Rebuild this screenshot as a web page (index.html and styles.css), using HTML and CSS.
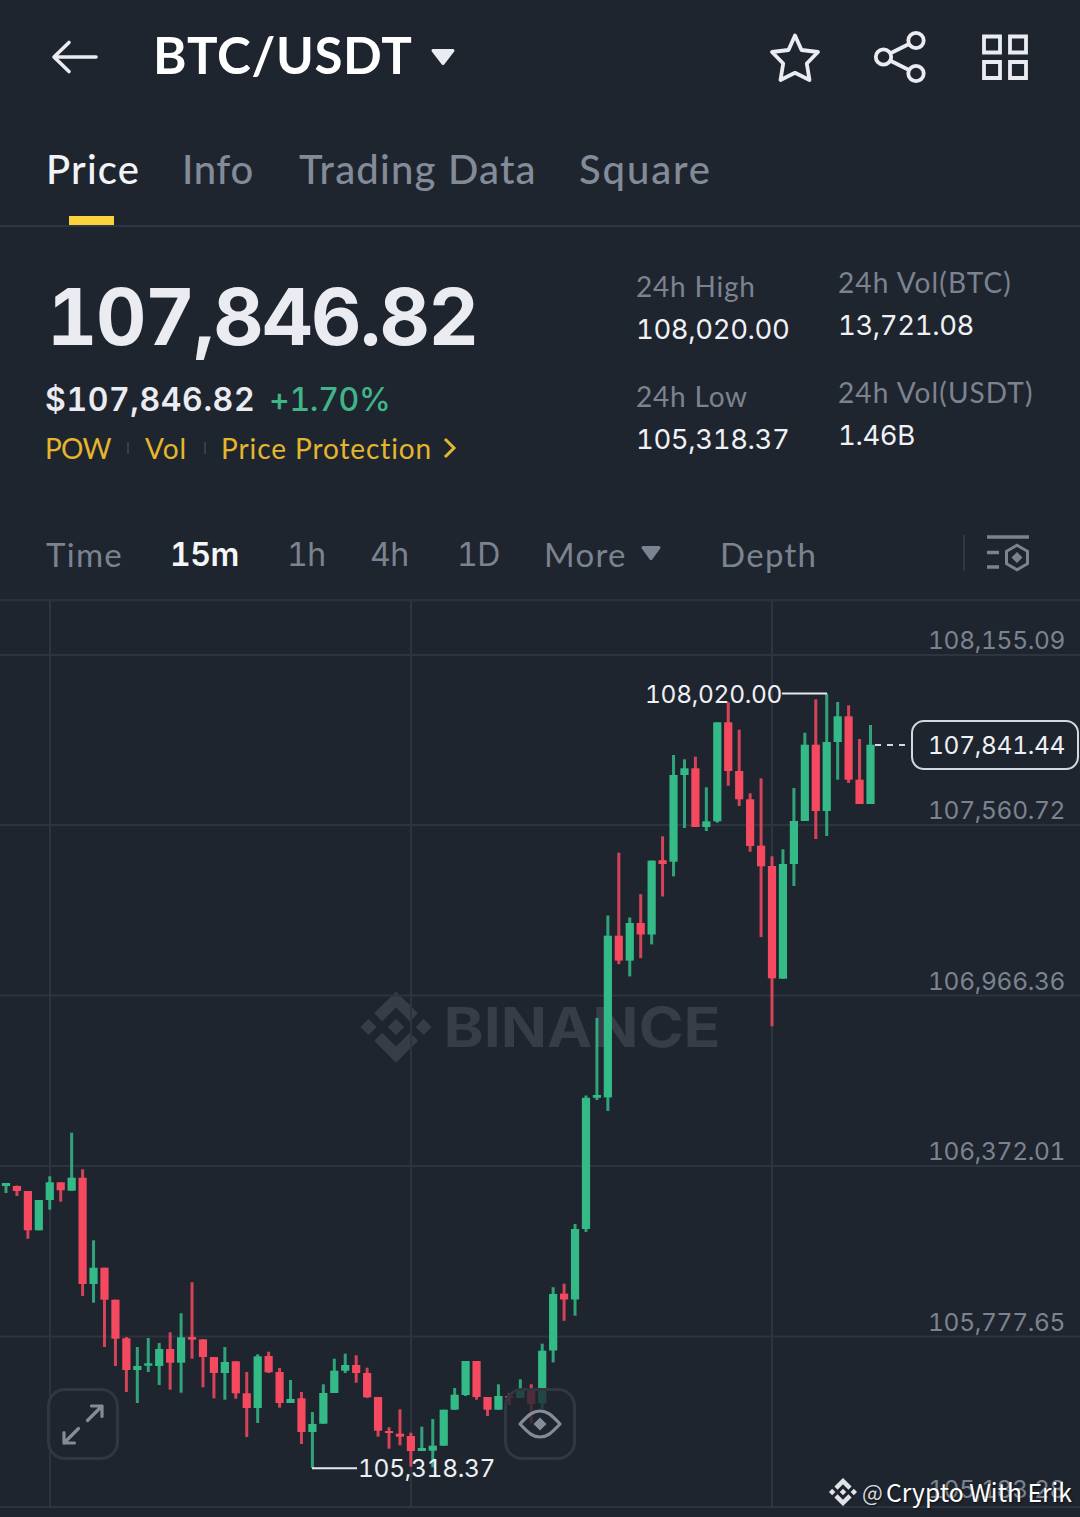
FILE: index.html
```html
<!DOCTYPE html>
<html lang="en">
<head>
<meta charset="utf-8">
<title>BTC/USDT</title>
<link rel="stylesheet" href="styles.css">
</head>
<body>
<header class="topbar">
  <svg class="back" width="48" height="36" viewBox="0 0 48 36"><path d="M19 3.500 4 18l15 14.500M4.500 18h41.500"/></svg>
  <h1 class="pair">BTC/USDT</h1>
  <svg class="pair-caret" width="26" height="18" viewBox="0 0 26 18"><path d="M3 2.500h20l-10 13z"/></svg>
  <div class="actions">
    <svg width="54" height="54" viewBox="0 0 54 54"><path d="M27 5.500 33.500 20 50 22 38.800 33.500 41.500 50 27 42.800 12.500 50 15.200 33.500 4 22 20.500 20z"/></svg>
    <svg width="54" height="54" viewBox="0 0 54 54"><circle cx="10.500" cy="27" r="7.700"/><circle cx="43" cy="10.500" r="7.700"/><circle cx="43" cy="43.500" r="7.700"/><path d="M17.500 23.300 36 14M17.500 30.700 36 40"/></svg>
    <svg class="square-icon" width="54" height="54" viewBox="0 0 54 54"><path d="M6 6.500h16v16H6zM32 6.500h16v16H32zM6 32h16v16H6zM32 32h16v16H32z"/></svg>
  </div>
</header>

<nav class="tabs">
  <span class="tab active">Price</span>
  <span class="tab info">Info</span>
  <span class="tab">Trading Data</span>
  <span class="tab square">Square</span>
</nav>

<section class="summary">
  <div class="quote">
    <div class="last">107,846.82</div>
    <div class="sub"><span class="fiat">$107,846.82</span><span class="change">+1.70%</span></div>
    <div class="tags">
      <span class="tag-pow">POW</span><i></i><span class="tag-vol">Vol</span><i></i><span class="tag-pp">Price Protection</span>
      <svg width="16" height="24" viewBox="0 0 16 24"><path d="M4 3 13 12l-9 9"/></svg>
    </div>
  </div>
  <dl class="stats">
    <div><dt>24h High</dt><dd>108,020.00</dd></div>
    <div><dt>24h Low</dt><dd>105,318.37</dd></div>
  </dl>
  <dl class="stats volume">
    <div><dt>24h Vol(BTC)</dt><dd>13,721.08</dd></div>
    <div><dt>24h Vol(USDT)</dt><dd>1.46B</dd></div>
  </dl>
</section>

<nav class="intervals">
  <span class="word">Time</span>
  <span class="active">15m</span>
  <span>1h</span>
  <span>4h</span>
  <span>1D</span>
  <span class="word">More</span>
  <svg class="more-caret" width="22" height="16" viewBox="0 0 22 16"><path d="M3 2.500h16l-8 11z"/></svg>
  <span class="word">Depth</span>
  <b class="divider"></b>
  <svg class="settings" width="46" height="40" viewBox="0 0 46 40"><path d="M2 4h42M2 19.500h12M2 34h12"/><path class="thin" d="M32 12.300 42.500 18.300v12.400L32 36.700 21.500 30.700V18.300z"/><path class="fill" d="m32 19 5.500 5.500L32 30l-5.500-5.500z"/></svg>
</nav>

<main class="chart">
  <svg class="plot" width="1080" height="918" viewBox="0 599 1080 918">
    <defs>
      <path id="logo" d="M38.730 53.200 63.310 28.620 87.900 53.210 102.200 38.910 63.310 0 24.430 38.900zM0 63.310 14.300 49l14.300 14.310-14.300 14.300zM38.730 73.410 63.310 98l24.590-24.600 14.310 14.290-38.900 38.920L24.430 87.740zM98 63.310 112.300 49l14.310 14.300-14.300 14.310zM77.830 63.300 63.310 48.780 48.810 63.270l14.500 14.500z"/>
    </defs>
    <g class="watermark">
      <use href="#logo" transform="translate(360.500 991.500) scale(.562)"/>
      <text x="443.500" y="1047" textLength="277" lengthAdjust="spacingAndGlyphs">BINANCE</text>
    </g>
    <path class="edge" d="M0 600h1080"/>
    <path class="grid" d="M0 655h1080M0 825h1080M0 995.500h1080M0 1166h1080M0 1336.500h1080M0 1507h1080M50 601v906M411 601v906M772 601v906"/>
    <g class="axis">
      <text x="928" y="649" textLength="137.500">108,155.09</text>
      <text x="928" y="819" textLength="137.500">107,560.72</text>
      <text x="928" y="990" textLength="137.500">106,966.36</text>
      <text x="928" y="1160" textLength="137.500">106,372.01</text>
      <text x="928" y="1331" textLength="137.500">105,777.65</text>
      <text x="928" y="1498" textLength="137.500">105,183.28</text>
    </g>
    <g id="candles"></g>
    <path class="current" d="M875 745h38"/>
    <rect class="price-box" x="912" y="721" width="166" height="48" rx="12"/>
    <path class="leader" d="M782 693.500h45M312 1468.200h45"/>
    <g class="mark">
      <text x="928" y="754" textLength="137.500">107,841.44</text>
      <text x="645" y="703" textLength="137.500">108,020.00</text>
      <text x="358" y="1477" textLength="137.500">105,318.37</text>
    </g>
  </svg>
  <button class="tool expand"><svg width="46" height="46" viewBox="0 0 46 46"><path d="M27.500 19.500 42 5M31.500 5H42v10.500M18.500 27.500 4 42M4 31.500V42h10.500"/></svg></button>
  <button class="tool eye"><svg width="46" height="34" viewBox="0 0 46 34"><path d="M3 17C12 7.500 16 4 23 4s11 3.500 20 13c-9 9.500-13 13-20 13S12 26.500 3 17z"/><path class="fill" d="m23 10.500 6.500 6.500-6.500 6.500-6.500-6.500z"/></svg></button>
  <div class="credit">
    <svg width="28" height="28" viewBox="0 0 126.600 126.600"><use href="#logo"/></svg>
    <span class="at">@</span><span>Crypto With Erik</span>
  </div>
</main>
<script src="chart.js"></script>
</body>
</html>
```
FILE: styles.css
```css
* { box-sizing: border-box; }
body {
  margin: 0;
  width: 1080px;
  height: 1517px;
  overflow: hidden;
  background: #1f252f;
  color: #eaecf2;
  font-family: Lato, "Open Sans", sans-serif;
}
svg { display: block; flex: none; fill: none; }
h1, dl, dd { margin: 0; }

.topbar { height: 114px; display: flex; align-items: center; padding: 0 48px 0 50px; }
.back { stroke: #eaecf2; stroke-width: 3.6; stroke-linecap: round; stroke-linejoin: round; }
.pair { width: 276px; margin-left: 55px; padding-bottom: 5px; font-size: 51px; font-weight: 700; line-height: 60px; color: #fff; letter-spacing: 0.7px; white-space: nowrap; }
.pair-caret, .more-caret { stroke-linejoin: round; stroke-width: 3; }
.pair-caret { margin-left: 1px; fill: #eaecf2; stroke: #eaecf2; }
.actions { margin-left: auto; display: flex; gap: 51px; }
.actions svg { stroke: #eaecf2; stroke-width: 3.8; stroke-linejoin: round; }
.actions .square-icon { stroke-linejoin: miter; }

.tabs { height: 113px; display: grid; grid-template-columns: 136px 117px 280px auto; padding-left: 46px; border-bottom: 2px solid #2f3643; font-size: 40px; font-weight: 500; line-height: 111px; color: #848b98; white-space: nowrap; letter-spacing: 1.2px; }
.tab.active { position: relative; color: #f2f3f7; }
.tab.info { letter-spacing: 0.6px; }
.tab.square { letter-spacing: 1.9px; }
.tab.active::after { content: ""; position: absolute; left: 23px; bottom: 0; width: 45px; height: 9px; background: #fad33c; }

.summary { height: 280px; display: grid; grid-template-columns: 590px 202px auto; padding-left: 46px; white-space: nowrap; }
.quote { padding-top: 45px; }
.last { padding-left: 1px; font: 700 78px/90px Inter, sans-serif; font-variant-numeric: tabular-nums; letter-spacing: -1.5px; }
.sub { display: flex; margin-top: 18px; margin-left: -1px; font: 600 32px/40px Inter, sans-serif; font-variant-numeric: tabular-nums; letter-spacing: 0.6px; }
.fiat { width: 224px; }
.change { color: #3fb588; font-weight: 500; letter-spacing: -0.3px; }
.tags { display: flex; align-items: center; margin-top: 10px; margin-left: -1px; font-size: 28px; line-height: 36px; color: #e3b62c; letter-spacing: 0.9px; }
.tags i { width: 2px; height: 12px; background: #39404c; }
.tag-pow { width: 82px; letter-spacing: -0.7px; }
.tag-vol { width: 59px; margin-left: 16px; }
.tag-pp { width: 220px; margin-left: 15px; }
.tags svg { stroke: #e3b62c; stroke-width: 3; }
.stats { display: flex; flex-direction: column; gap: 24px; padding-top: 38px; font-size: 28px; line-height: 43px; }
.stats.volume { padding-top: 34px; }
.stats dt { color: #7c8390; letter-spacing: 0.8px; }
.stats.volume dt { letter-spacing: 1.1px; }
.stats dd { font-family: Inter, sans-serif; font-size: 27.5px; font-variant-numeric: tabular-nums; letter-spacing: -0.4px; color: #f0f1f5; }

.intervals { height: 92px; display: grid; grid-template-columns: 124px 117px 83px 87px 87px 96px 80px 243px 21px auto; align-items: center; padding-left: 46px; font: 400 32px/40px Inter, sans-serif; font-variant-numeric: tabular-nums; color: #7c8390; white-space: nowrap; letter-spacing: -0.4px; }
.intervals span { padding-top: 3px; }
.intervals .word { padding-top: 2px; font-family: Lato, sans-serif; font-size: 33px; letter-spacing: 1.3px; }
.intervals .active { color: #f5f6f8; font-weight: 600; }
.more-caret { fill: #7c8390; stroke: #7c8390; }
.divider { width: 2px; height: 36px; background: #303743; }
.settings { margin-left: 1px; stroke: #7c8390; stroke-width: 3.6; }
.settings .thin { stroke-width: 3; }
.fill { fill: #7c8390; stroke: none; }

.chart { position: relative; height: 918px; }
.edge { stroke: #2a313b; stroke-width: 3; }
.grid { stroke: #2d343f; stroke-width: 2; }
.watermark { fill: #363d47; font: 700 55px Inter, sans-serif; }
.axis { fill: #7c8390; }
.axis, .mark { font: 400 24.5px Inter, sans-serif; font-variant-numeric: tabular-nums; }
.mark { fill: #eff0f5; }
.up { fill: #33ba87; }
.down { fill: #f4495f; }
.wick { opacity: .85; }
.leader { stroke: #e6e8ee; stroke-width: 2; }
.current { stroke: #d5d8de; stroke-width: 2; stroke-dasharray: 6 6; }
.price-box { fill: #1f252f; stroke: #d5d8de; stroke-width: 2; }

.tool { position: absolute; top: 789px; width: 72px; height: 72px; padding: 0; display: grid; place-items: center; border: 3px solid #303742; border-radius: 18px; background: rgba(31, 37, 47, .78); }
.tool svg { stroke: #858b97; stroke-width: 3.2; stroke-linejoin: round; stroke-linecap: round; }
.expand { left: 47px; }
.eye { left: 504px; }
.eye .fill { fill: #858b97; stroke: none; }
.credit { position: absolute; left: 829px; bottom: 6px; display: flex; align-items: center; font: 400 24.7px/40px "Noto Sans CJK SC", sans-serif; color: #fff; white-space: nowrap; text-shadow: 1px 1px 2px #0009; }
.credit span { margin-top: -2px; }
.credit svg { fill: #e0e3e8; }
.credit .at { width: 24px; margin-left: 5px; font-size: 22px; color: #d5d8de; }
```
FILE: chart.js
```js
// One row per candle: direction, high, body top, body bottom, low (chart y units)
const candles = [
['u',1183,1183,1186,1193],['d',1185.5,1186,1191,1196],['d',1191,1191,1230.3,1238.7],['u',1200,1200,1230.3,1230.3],
['u',1176.3,1182.3,1200,1209.7],['d',1182.3,1182.3,1190.3,1201.7],['u',1132.7,1177.7,1190.7,1190.7],['d',1169.3,1177.7,1284,1296],
['u',1240.3,1267.7,1284,1302.7],['d',1267.7,1267.7,1299.7,1347],['d',1299.7,1299.7,1338.7,1366],['d',1337,1338.3,1370,1392],
['u',1347,1366,1370,1403],['u',1338,1363.3,1365.7,1372],['u',1343,1349,1366,1385],['d',1332.3,1349,1362.7,1389.7],
['u',1313.3,1337.3,1362.7,1392.7],['d',1282.3,1337,1339.7,1358.7],['d',1339.3,1339.3,1357,1387.3],['d',1357,1357,1373,1398.3],
['u',1347,1362,1373,1399.7],['d',1361.3,1361.3,1393.3,1398.7],['d',1372,1393.3,1408,1437],['u',1354.3,1356.3,1408,1423],
['d',1351.7,1356,1372.3,1373],['d',1368,1372,1403,1407.7],['u',1380,1399,1403,1403],['d',1392,1398.3,1432,1444],
['u',1412,1424,1432,1468],['u',1384.3,1393,1423.7,1423.7],['u',1358.7,1370.7,1393,1393],['u',1353.7,1365,1370.7,1373],
['d',1355.3,1365,1373,1382.7],['d',1367.7,1373,1397.3,1398],['d',1397,1397,1430.7,1436.7],['d',1427.3,1431,1433,1448.7],
['d',1409.3,1433.7,1436.7,1445.3],['d',1432.7,1436,1451,1466.7],['u',1426.7,1448,1451,1451],['u',1419,1445.7,1450.7,1467.3],
['u',1409.7,1409.7,1445.7,1445.7],['u',1388,1394.7,1409.7,1409.7],['u',1361,1361,1395,1396],['d',1361,1361,1397,1399.7],
['d',1397,1397,1409.7,1416],['u',1384.3,1396,1409.7,1409.7],['d',1393.3,1396,1397.7,1405],['u',1379.3,1391,1398,1398],
['d',1384.3,1390.7,1404,1423.3],['u',1343.7,1350.7,1403.3,1409.3],['u',1287.2,1294,1350.5,1362.4],['d',1283.7,1293.6,1299.5,1320.8],
['u',1224,1229,1299.5,1315.7],['u',1095.5,1097.8,1229,1231.9],['u',1018,1095,1097.8,1100],['u',915.5,935.7,1097.4,1110.9],
['d',852.7,935.7,960.6,964.2],['u',917.5,923,960.6,976.4],['d',894.2,923,934.5,958.2],['u',860.6,860.6,934.5,944.4],
['d',836.3,860.2,864,896.5],['u',755,775,861.7,876.4],['u',759.3,768.3,775,828],['d',756.7,768.3,827,827],
['u',787.3,821.3,827,831],['u',722.3,722.3,821.3,822.7],['d',702.3,722.3,771,785.7],['d',729.7,771,799.3,806],
['d',793.3,799.3,846,851.7],['d',778.3,845.7,866.3,937],['d',856.3,866,978.3,1026.3],['u',849.3,864,978.7,978.7],
['u',788,821,864,886],['u',732.7,744.7,821,821],['d',699.3,744.7,811,839],['u',693.7,742,811,836],
['u',702,716.3,742,779.7],['d',705.3,716.3,779.7,783],['d',739,779.7,804,804],['u',725,744.7,804,804]
];
const group = document.getElementById('candles');
const bar = (cls, x, y, w, h) => {
  const r = document.createElementNS('http://www.w3.org/2000/svg', 'rect');
  r.setAttribute('class', cls);
  r.setAttribute('x', x.toFixed(2));
  r.setAttribute('y', y);
  r.setAttribute('width', w);
  r.setAttribute('height', h.toFixed(2));
  group.appendChild(r);
};
candles.forEach(([dir, high, top, bottom, low], i) => {
  const x = 6 + i * 10.943;
  const cls = dir === 'u' ? 'up' : 'down';
  bar(cls + ' wick', x - 1.5, high, 3, low - high);
  bar(cls, x - 4.1, top, 8.2, bottom - top);
});
```
